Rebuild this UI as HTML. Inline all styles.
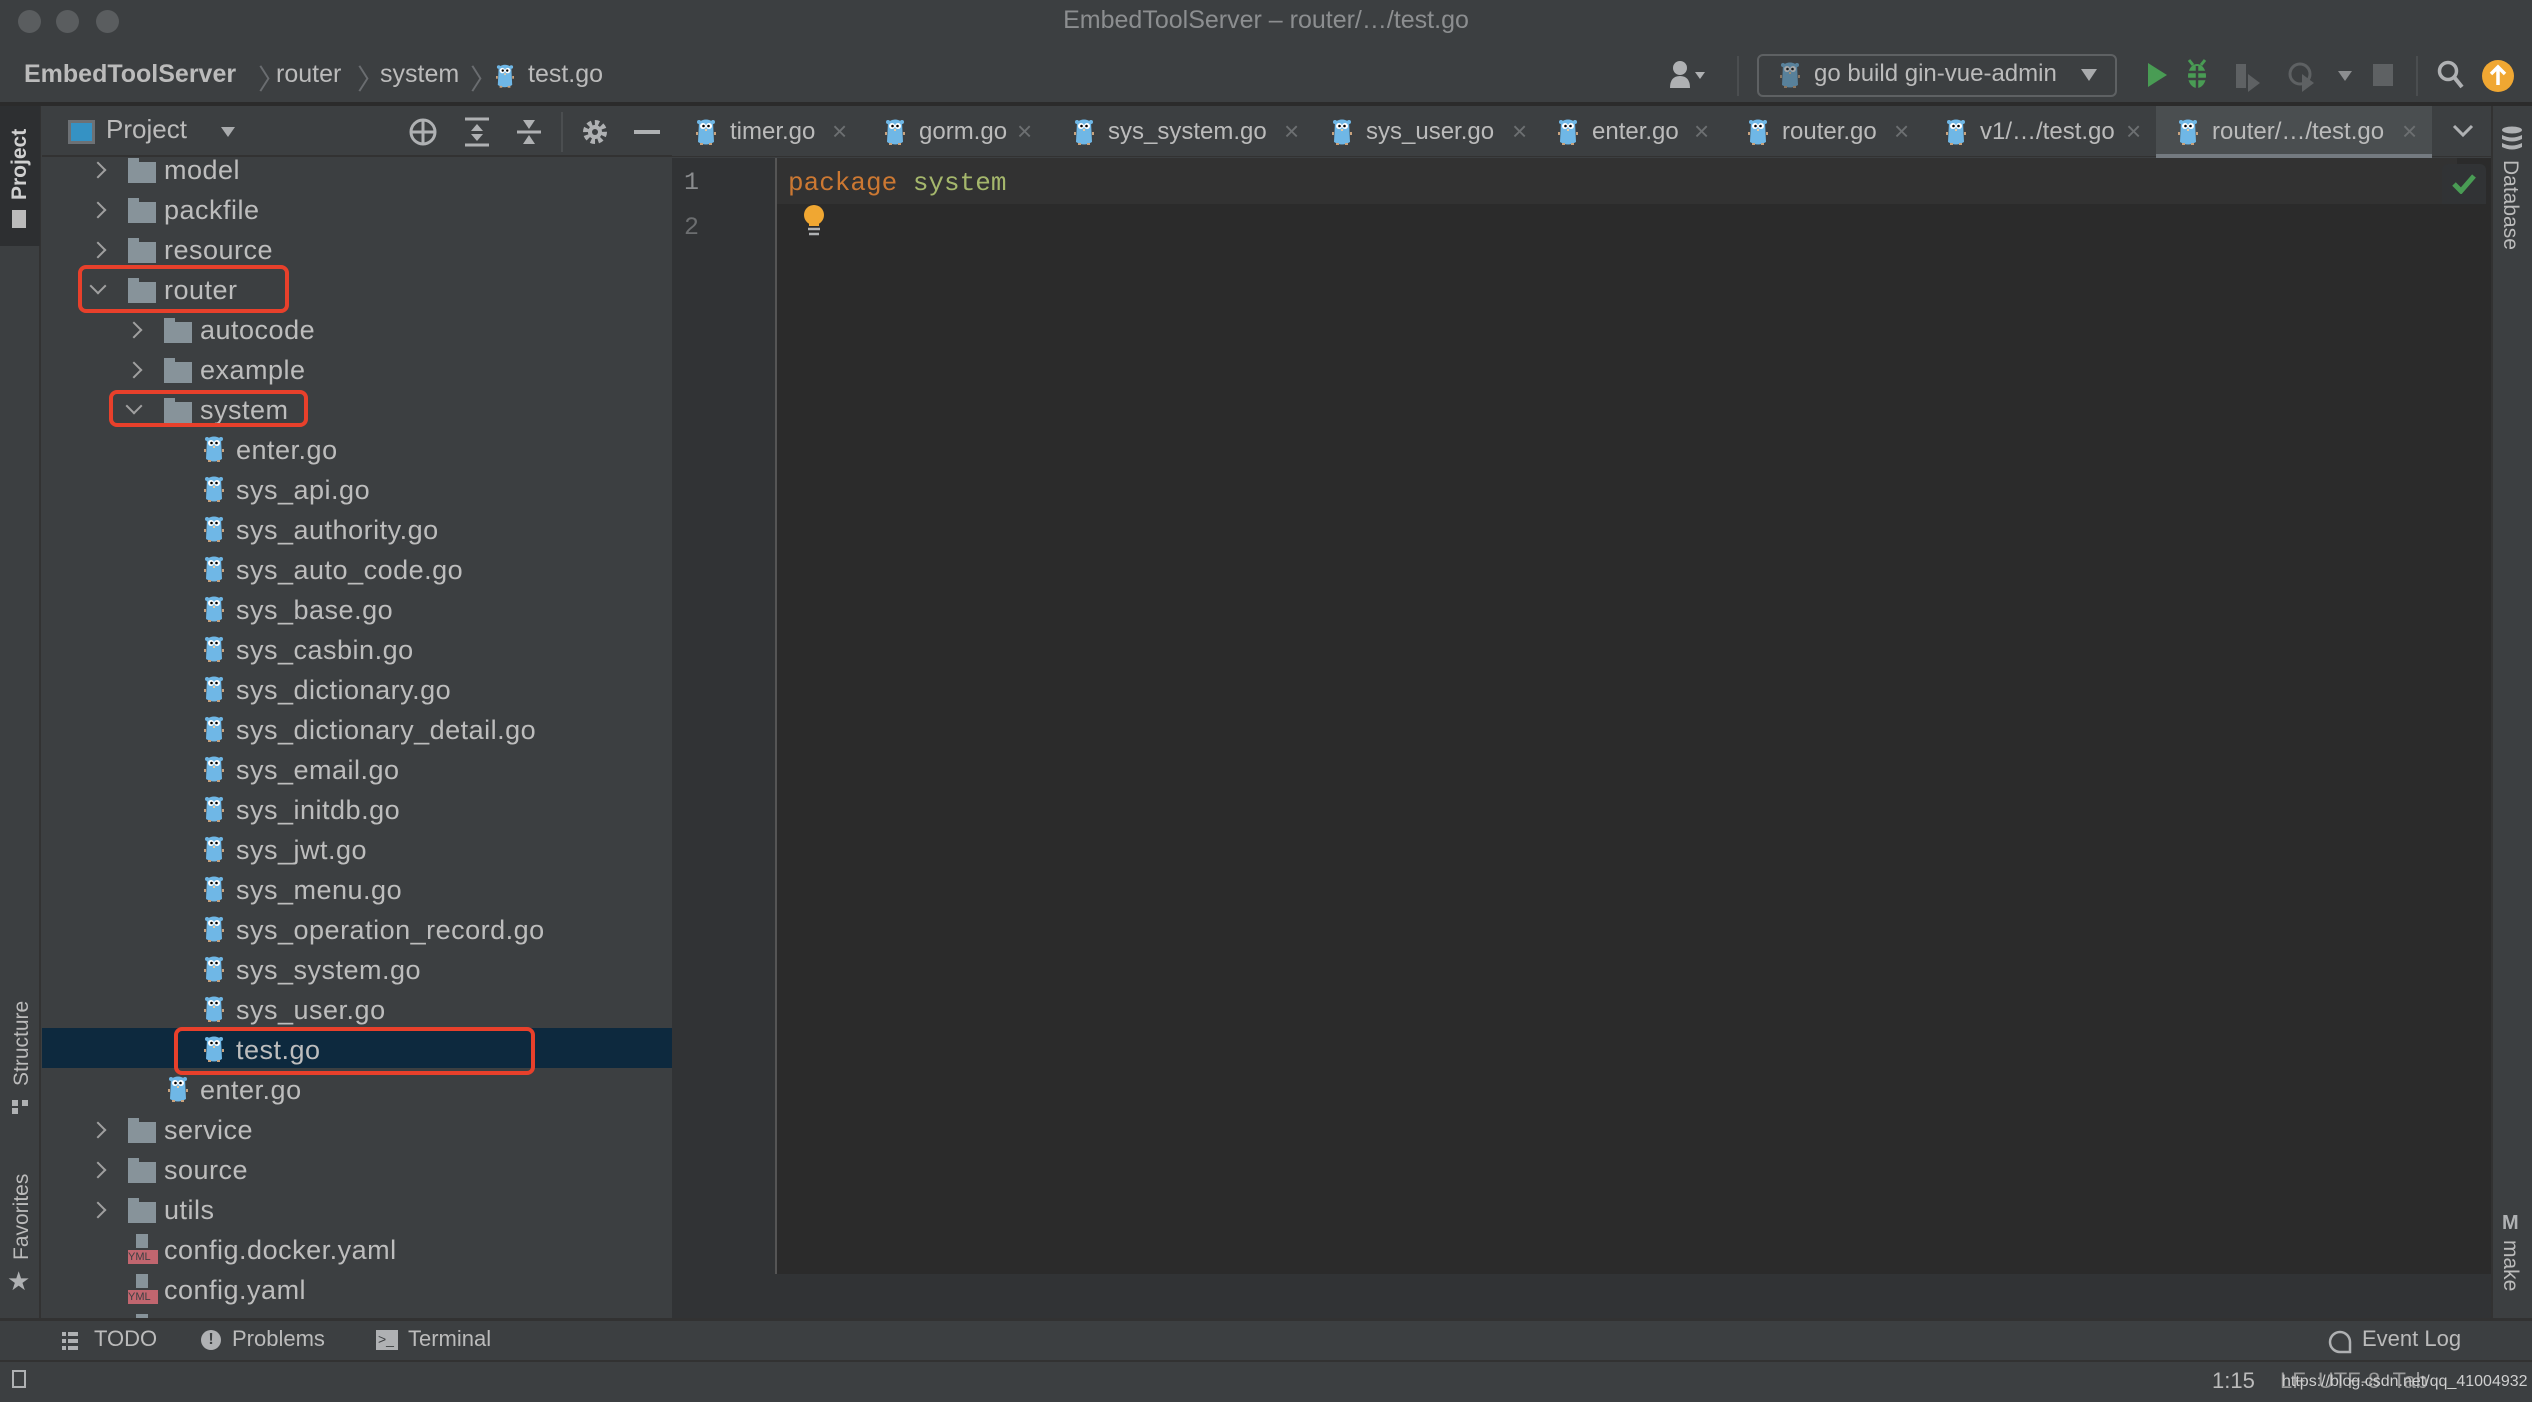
<!DOCTYPE html>
<html><head><meta charset="utf-8">
<style>
*{margin:0;padding:0;box-sizing:border-box}
body{width:2532px;height:1402px;background:#3c3f41;font-family:"Liberation Sans",sans-serif;color:#bbbbbb;position:relative;overflow:hidden}
.a{position:absolute}
.t{position:absolute;font-size:27px;letter-spacing:0.5px;line-height:40px;white-space:nowrap;color:#bdbdbd}
.arr{position:absolute;width:12px;height:12px;border-right:2.5px solid #a0a0a0;border-bottom:2.5px solid #a0a0a0}
.r{transform:rotate(-45deg)}
.d{transform:rotate(45deg)}
.fold{position:absolute;width:28px;height:21px;background:#87939a}
.fold:before{content:"";position:absolute;left:0;top:-4px;width:11px;height:5px;background:#87939a}
.box{position:absolute;border:4px solid #e8402b;border-radius:8px}
.tab{position:absolute;top:106px;height:51px;font-size:24px;line-height:51px;color:#bbbbbb;white-space:nowrap}
.x{position:absolute;font-size:26px;color:#6c6f71;top:0}
.vt{position:absolute;font-size:21px;color:#bbbbbb;white-space:nowrap;transform-origin:left top}
</style></head><body>
<svg width="0" height="0" style="position:absolute">
<defs>
<symbol id="g" viewBox="0 0 20 28">
<path d="M3 4 Q10 -1 17 4 L18 24 Q10 29 2 24Z" fill="#6fb7e6"/>
<ellipse cx="3" cy="4" rx="2" ry="2" fill="#6fb7e6"/><ellipse cx="17" cy="4" rx="2" ry="2" fill="#6fb7e6"/>
<circle cx="7" cy="8" r="3" fill="#fff"/><circle cx="13" cy="8" r="3" fill="#fff"/>
<circle cx="7.5" cy="8" r="1.3" fill="#000"/><circle cx="12.5" cy="8" r="1.3" fill="#000"/>
<rect x="9" y="11" width="2" height="2" fill="#e8c9a0"/>
<rect x="0" y="14" width="2" height="3" fill="#c9a27c"/><rect x="18" y="14" width="2" height="3" fill="#c9a27c"/>
<rect x="4" y="25" width="3" height="2" fill="#c9a27c"/><rect x="13" y="25" width="3" height="2" fill="#c9a27c"/>
</symbol>
</defs></svg>

<!-- title bar -->
<div class="a" style="left:0;top:0;width:2532px;height:104px;background:#3c3f41"></div>
<div class="a" style="left:18px;top:10px;width:23px;height:23px;border-radius:50%;background:#5a5d5f"></div>
<div class="a" style="left:56px;top:10px;width:23px;height:23px;border-radius:50%;background:#5a5d5f"></div>
<div class="a" style="left:96px;top:10px;width:23px;height:23px;border-radius:50%;background:#5a5d5f"></div>
<div class="a" style="left:0;top:6px;width:2532px;text-align:center;font-size:25px;color:#8c8e90">EmbedToolServer – router/…/test.go</div>

<!-- nav bar -->
<div class="a" style="left:24px;top:60px;font-size:25px;font-weight:bold;color:#bbbbbb">EmbedToolServer</div>
<div class="a" style="left:258px;top:58px;font-size:28px;color:#6a6d70">〉</div>
<div class="a" style="left:276px;top:60px;font-size:25px">router</div>
<div class="a" style="left:357px;top:58px;font-size:28px;color:#6a6d70">〉</div>
<div class="a" style="left:380px;top:60px;font-size:25px">system</div>
<div class="a" style="left:470px;top:58px;font-size:28px;color:#6a6d70">〉</div>
<svg class="a" style="left:496px;top:62px" width="18" height="28"><use href="#g"/></svg>
<div class="a" style="left:528px;top:60px;font-size:25px">test.go</div>

<!-- toolbar right -->
<svg class="a" style="left:1668px;top:60px" width="40" height="30"><circle cx="12" cy="8" r="7" fill="#afb1b3"/><path d="M2 28 Q2 16 12 16 Q22 16 22 28Z" fill="#afb1b3"/><path d="M27 12h10l-5 7z" fill="#afb1b3"/></svg>
<div class="a" style="left:1737px;top:56px;width:2px;height:40px;background:#4b4e50"></div>
<div class="a" style="left:1757px;top:54px;width:360px;height:43px;border:2px solid #5e6163;border-radius:6px"></div>
<svg class="a" style="left:1780px;top:60px;opacity:.55" width="20" height="30"><use href="#g"/></svg>
<div class="a" style="left:1814px;top:60px;font-size:24px;color:#bbbbbb">go build gin-vue-admin</div>
<svg class="a" style="left:2080px;top:68px" width="18" height="14"><path d="M1 1h16l-8 12z" fill="#a9abad"/></svg>
<svg class="a" style="left:2146px;top:62px" width="22" height="26"><path d="M2 1l19 12L2 25z" fill="#499c54"/></svg>
<svg class="a" style="left:2184px;top:58px" width="26" height="32"><ellipse cx="13" cy="18" rx="9" ry="12" fill="#499c54"/><path d="M5 2l4 5M21 2l-4 5" stroke="#499c54" stroke-width="3"/><path d="M4 14h18M4 21h18M13 8v22" stroke="#3c3f41" stroke-width="2.5"/></svg>
<svg class="a" style="left:2234px;top:60px" width="28" height="32"><path d="M2 4h10v24H2z" fill="#5e6163"/><path d="M14 14l12 9-12 9z" fill="#5e6163"/></svg>
<svg class="a" style="left:2288px;top:60px" width="28" height="32"><circle cx="12" cy="14" r="10" fill="none" stroke="#5e6163" stroke-width="3"/><path d="M14 14l12 9-12 9z" fill="#5e6163"/></svg>
<svg class="a" style="left:2337px;top:70px" width="16" height="12"><path d="M1 1h14l-7 10z" fill="#8c8e90"/></svg>
<div class="a" style="left:2373px;top:64px;width:20px;height:22px;background:#5e6163"></div>
<div class="a" style="left:2416px;top:56px;width:2px;height:40px;background:#4b4e50"></div>
<svg class="a" style="left:2437px;top:60px" width="28" height="30"><circle cx="11" cy="11" r="8.5" fill="none" stroke="#afb1b3" stroke-width="3.5"/><path d="M17 17l8 10" stroke="#afb1b3" stroke-width="4"/></svg>
<svg class="a" style="left:2481px;top:58px" width="34" height="36"><circle cx="17" cy="18" r="16" fill="#f0a732"/><path d="M17 9v18M10 16l7-7 7 7" stroke="#fff" stroke-width="3.5" fill="none"/></svg>

<div class="a" style="left:0;top:102px;width:2532px;height:4px;background:#2b2b2b"></div>

<!-- left stripe -->
<div class="a" style="left:0;top:106px;width:41px;height:1212px;background:#3c3f41;border-right:2px solid #323232"></div>
<div class="a" style="left:0;top:106px;width:40px;height:140px;background:#2d2f31"></div>
<div class="vt" style="left:8px;top:200px;transform:rotate(-90deg);font-weight:bold;color:#d0d0d0">Project</div>
<div class="a" style="left:12px;top:210px;width:14px;height:18px;background:#bbbbbb"></div>
<div class="vt" style="left:10px;top:1086px;transform:rotate(-90deg)">Structure</div>
<div class="a" style="left:12px;top:1100px;width:6px;height:6px;background:#afb1b3;box-shadow:10px 0 0 #afb1b3,0 8px 0 #afb1b3"></div>
<div class="vt" style="left:10px;top:1260px;transform:rotate(-90deg)">Favorites</div>
<div class="a" style="left:7px;top:1266px;font-size:26px;color:#afb1b3">★</div>

<!-- project panel -->
<div class="a" style="left:42px;top:106px;width:630px;height:51px;background:#3c3f41;border-bottom:2px solid #323232"></div>
<div class="a" style="left:68px;top:120px;width:27px;height:24px;border:3px solid #6d7175;background:#3592c4"></div>
<div class="a" style="left:106px;top:114px;font-size:26px">Project</div>
<svg class="a" style="left:220px;top:126px" width="16" height="12"><path d="M1 1h14l-7 10z" fill="#a9abad"/></svg>
<svg class="a" style="left:408px;top:117px" width="30" height="30"><circle cx="15" cy="15" r="12" fill="none" stroke="#afb1b3" stroke-width="3"/><path d="M15 3v24M3 15h24" stroke="#afb1b3" stroke-width="3"/></svg>
<svg class="a" style="left:464px;top:117px" width="26" height="30"><path d="M1 2h24M1 28h24" stroke="#afb1b3" stroke-width="3"/><path d="M13 7l-6 7h12zM13 24l-6-7h12z" fill="#afb1b3"/></svg>
<svg class="a" style="left:516px;top:117px" width="26" height="30"><path d="M1 15h24" stroke="#afb1b3" stroke-width="3"/><path d="M13 12l-6-9h12zM13 18l-6 9h12z" fill="#afb1b3"/></svg>
<div class="a" style="left:561px;top:112px;width:2px;height:40px;background:#4b4e50"></div>
<svg class="a" style="left:580px;top:117px" width="30" height="30"><circle cx="15" cy="15" r="9" fill="none" stroke="#afb1b3" stroke-width="6" stroke-dasharray="4 3"/><circle cx="15" cy="15" r="7" fill="#afb1b3"/><circle cx="15" cy="15" r="3" fill="#3c3f41"/></svg>
<div class="a" style="left:634px;top:130px;width:26px;height:4px;background:#afb1b3"></div>

<div class="a" style="left:42px;top:1028px;width:630px;height:40px;background:#0d293e"></div>

<!-- tree -->
<div class="arr r" style="left:92px;top:164px"></div><div class="fold" style="left:128px;top:162px"></div><div class="t" style="left:164px;top:150px">model</div>
<div class="arr r" style="left:92px;top:204px"></div><div class="fold" style="left:128px;top:202px"></div><div class="t" style="left:164px;top:190px">packfile</div>
<div class="arr r" style="left:92px;top:244px"></div><div class="fold" style="left:128px;top:242px"></div><div class="t" style="left:164px;top:230px">resource</div>
<div class="arr d" style="left:92px;top:280px"></div><div class="fold" style="left:128px;top:282px"></div><div class="t" style="left:164px;top:270px">router</div>
<div class="arr r" style="left:128px;top:324px"></div><div class="fold" style="left:164px;top:322px"></div><div class="t" style="left:200px;top:310px">autocode</div>
<div class="arr r" style="left:128px;top:364px"></div><div class="fold" style="left:164px;top:362px"></div><div class="t" style="left:200px;top:350px">example</div>
<div class="arr d" style="left:128px;top:400px"></div><div class="fold" style="left:164px;top:402px"></div><div class="t" style="left:200px;top:390px">system</div>

<svg class="a" style="left:204px;top:435px" width="20" height="28"><use href="#g"/></svg><div class="t" style="left:236px;top:430px">enter.go</div>
<svg class="a" style="left:204px;top:475px" width="20" height="28"><use href="#g"/></svg><div class="t" style="left:236px;top:470px">sys_api.go</div>
<svg class="a" style="left:204px;top:515px" width="20" height="28"><use href="#g"/></svg><div class="t" style="left:236px;top:510px">sys_authority.go</div>
<svg class="a" style="left:204px;top:555px" width="20" height="28"><use href="#g"/></svg><div class="t" style="left:236px;top:550px">sys_auto_code.go</div>
<svg class="a" style="left:204px;top:595px" width="20" height="28"><use href="#g"/></svg><div class="t" style="left:236px;top:590px">sys_base.go</div>
<svg class="a" style="left:204px;top:635px" width="20" height="28"><use href="#g"/></svg><div class="t" style="left:236px;top:630px">sys_casbin.go</div>
<svg class="a" style="left:204px;top:675px" width="20" height="28"><use href="#g"/></svg><div class="t" style="left:236px;top:670px">sys_dictionary.go</div>
<svg class="a" style="left:204px;top:715px" width="20" height="28"><use href="#g"/></svg><div class="t" style="left:236px;top:710px">sys_dictionary_detail.go</div>
<svg class="a" style="left:204px;top:755px" width="20" height="28"><use href="#g"/></svg><div class="t" style="left:236px;top:750px">sys_email.go</div>
<svg class="a" style="left:204px;top:795px" width="20" height="28"><use href="#g"/></svg><div class="t" style="left:236px;top:790px">sys_initdb.go</div>
<svg class="a" style="left:204px;top:835px" width="20" height="28"><use href="#g"/></svg><div class="t" style="left:236px;top:830px">sys_jwt.go</div>
<svg class="a" style="left:204px;top:875px" width="20" height="28"><use href="#g"/></svg><div class="t" style="left:236px;top:870px">sys_menu.go</div>
<svg class="a" style="left:204px;top:915px" width="20" height="28"><use href="#g"/></svg><div class="t" style="left:236px;top:910px">sys_operation_record.go</div>
<svg class="a" style="left:204px;top:955px" width="20" height="28"><use href="#g"/></svg><div class="t" style="left:236px;top:950px">sys_system.go</div>
<svg class="a" style="left:204px;top:995px" width="20" height="28"><use href="#g"/></svg><div class="t" style="left:236px;top:990px">sys_user.go</div>
<svg class="a" style="left:204px;top:1035px" width="20" height="28"><use href="#g"/></svg><div class="t" style="left:236px;top:1030px">test.go</div>
<svg class="a" style="left:168px;top:1075px" width="20" height="28"><use href="#g"/></svg><div class="t" style="left:200px;top:1070px">enter.go</div>

<div class="arr r" style="left:92px;top:1124px"></div><div class="fold" style="left:128px;top:1122px"></div><div class="t" style="left:164px;top:1110px">service</div>
<div class="arr r" style="left:92px;top:1164px"></div><div class="fold" style="left:128px;top:1162px"></div><div class="t" style="left:164px;top:1150px">source</div>
<div class="arr r" style="left:92px;top:1204px"></div><div class="fold" style="left:128px;top:1202px"></div><div class="t" style="left:164px;top:1190px">utils</div>
<div class="a" style="left:136px;top:1234px;width:12px;height:14px;background:#87939a"></div><div class="a" style="left:128px;top:1250px;width:30px;height:14px;background:#c1666f;font-size:11px;line-height:14px;color:#3c3f41">YML</div><div class="t" style="left:164px;top:1230px">config.docker.yaml</div>
<div class="a" style="left:136px;top:1274px;width:12px;height:14px;background:#87939a"></div><div class="a" style="left:128px;top:1290px;width:30px;height:14px;background:#c1666f;font-size:11px;line-height:14px;color:#3c3f41">YML</div><div class="t" style="left:164px;top:1270px">config.yaml</div>
<div class="a" style="left:136px;top:1314px;width:12px;height:4px;background:#87939a"></div>

<div class="box" style="left:78px;top:265px;width:211px;height:48px"></div>
<div class="box" style="left:109px;top:390px;width:199px;height:37px"></div>
<div class="box" style="left:174px;top:1027px;width:361px;height:48px"></div>

<!-- editor -->
<div class="a" style="left:672px;top:106px;width:1819px;height:51px;background:#3c3f41;border-bottom:1px solid #323232"></div>
<div class="a" style="left:2156px;top:106px;width:276px;height:53px;background:#4a4e50"></div>
<div class="a" style="left:2156px;top:154px;width:276px;height:5px;background:#747a80"></div>

<div class="tab" style="left:696px"><svg style="position:absolute;top:12px" width="20" height="28"><use href="#g"/></svg><span style="position:absolute;left:34px">timer.go</span><span class="x" style="left:136px">×</span></div>
<div class="tab" style="left:885px"><svg style="position:absolute;top:12px" width="20" height="28"><use href="#g"/></svg><span style="position:absolute;left:34px">gorm.go</span><span class="x" style="left:132px">×</span></div>
<div class="tab" style="left:1074px"><svg style="position:absolute;top:12px" width="20" height="28"><use href="#g"/></svg><span style="position:absolute;left:34px">sys_system.go</span><span class="x" style="left:210px">×</span></div>
<div class="tab" style="left:1332px"><svg style="position:absolute;top:12px" width="20" height="28"><use href="#g"/></svg><span style="position:absolute;left:34px">sys_user.go</span><span class="x" style="left:180px">×</span></div>
<div class="tab" style="left:1558px"><svg style="position:absolute;top:12px" width="20" height="28"><use href="#g"/></svg><span style="position:absolute;left:34px">enter.go</span><span class="x" style="left:136px">×</span></div>
<div class="tab" style="left:1748px"><svg style="position:absolute;top:12px" width="20" height="28"><use href="#g"/></svg><span style="position:absolute;left:34px">router.go</span><span class="x" style="left:146px">×</span></div>
<div class="tab" style="left:1946px"><svg style="position:absolute;top:12px" width="20" height="28"><use href="#g"/></svg><span style="position:absolute;left:34px">v1/…/test.go</span><span class="x" style="left:180px">×</span></div>
<div class="tab" style="left:2178px"><svg style="position:absolute;top:12px" width="20" height="28"><use href="#g"/></svg><span style="position:absolute;left:34px">router/…/test.go</span><span class="x" style="left:224px">×</span></div>
<svg class="a" style="left:2452px;top:124px" width="22" height="14"><path d="M2 2l9 9 9-9" stroke="#afb1b3" stroke-width="3" fill="none"/></svg>

<div class="a" style="left:672px;top:158px;width:1819px;height:1116px;background:#2b2b2b"></div>
<div class="a" style="left:672px;top:158px;width:103px;height:1116px;background:#313335"></div>
<div class="a" style="left:775px;top:158px;width:2px;height:1116px;background:#555555"></div>
<div class="a" style="left:777px;top:158px;width:1680px;height:46px;background:#323232"></div>
<div class="a" style="left:2442px;top:164px;width:44px;height:40px;background:#313335;border-radius:6px 6px 0 0"></div>
<svg class="a" style="left:2452px;top:174px" width="24" height="20"><path d="M2 10l7 7L22 2" stroke="#499c54" stroke-width="5" fill="none"/></svg>
<div class="a" style="left:684px;top:168px;font-family:'Liberation Mono',monospace;font-size:25px;color:#8a8c8e">1</div>
<div class="a" style="left:684px;top:213px;font-family:'Liberation Mono',monospace;font-size:25px;color:#6c6e70">2</div>
<div class="a" style="left:788px;top:168px;font-family:'Liberation Mono',monospace;font-size:26px;color:#cc7832;white-space:pre">package <span style="color:#a5b76c">system</span></div>
<svg class="a" style="left:802px;top:205px" width="24" height="32"><circle cx="12" cy="10" r="10" fill="#f0a732"/><rect x="7" y="16" width="10" height="5" fill="#f0a732"/><path d="M6 24h12M7 29h10" stroke="#afb1b3" stroke-width="2.5"/></svg>
<div class="a" style="left:672px;top:1274px;width:1819px;height:44px;background:#313335"></div>

<!-- right stripe -->
<div class="a" style="left:2491px;top:106px;width:41px;height:1212px;background:#3c3f41;border-left:2px solid #323232"></div>
<svg class="a" style="left:2500px;top:126px" width="24" height="24"><ellipse cx="12" cy="4" rx="10" ry="3.5" fill="#afb1b3"/><path d="M2 9q10 5 20 0v4q-10 5-20 0zM2 17q10 5 20 0v4q-10 5-20 0z" fill="#afb1b3"/></svg>
<div class="vt" style="left:2522px;top:160px;transform:rotate(90deg)">Database</div>
<div class="a" style="left:2502px;top:1212px;font-size:20px;font-weight:bold;color:#afb1b3">M</div>
<div class="vt" style="left:2522px;top:1240px;transform:rotate(90deg)">make</div>

<!-- bottom tool bar -->
<div class="a" style="left:0;top:1318px;width:2532px;height:3px;background:#323232"></div>
<div class="a" style="left:0;top:1321px;width:2532px;height:39px;background:#3c3f41"></div>
<div class="a" style="left:62px;top:1332px;width:4px;height:4px;background:#afb1b3;box-shadow:0 7px 0 #afb1b3,0 14px 0 #afb1b3,6px 0 0 #afb1b3,6px 7px 0 #afb1b3,6px 14px 0 #afb1b3"></div>
<div class="a" style="left:68px;top:1332px;width:10px;height:4px;background:#afb1b3;box-shadow:0 7px 0 #afb1b3,0 14px 0 #afb1b3"></div>
<div class="a" style="left:94px;top:1326px;font-size:22px">TODO</div>
<div class="a" style="left:201px;top:1330px;width:20px;height:20px;border-radius:50%;background:#afb1b3;color:#3c3f41;font-size:16px;font-weight:bold;text-align:center;line-height:20px">!</div>
<div class="a" style="left:232px;top:1326px;font-size:22px">Problems</div>
<div class="a" style="left:376px;top:1330px;width:22px;height:20px;background:#afb1b3;color:#3c3f41;font-size:14px;line-height:18px;padding-left:2px">&gt;_</div>
<div class="a" style="left:408px;top:1326px;font-size:22px">Terminal</div>
<svg class="a" style="left:2328px;top:1330px" width="24" height="24"><path d="M12 2a10 10 0 1 0 0 20h10V12A10 10 0 0 0 12 2z" fill="none" stroke="#afb1b3" stroke-width="2.5"/></svg>
<div class="a" style="left:2362px;top:1326px;font-size:22px">Event Log</div>

<!-- status bar -->
<div class="a" style="left:0;top:1360px;width:2532px;height:2px;background:#323232"></div>
<div class="a" style="left:0;top:1362px;width:2532px;height:40px;background:#3c3f41"></div>
<div class="a" style="left:12px;top:1370px;width:14px;height:18px;border:2px solid #afb1b3"></div>
<div class="a" style="left:2212px;top:1368px;font-size:22px">1:15</div>
<div class="a" style="left:2280px;top:1368px;font-size:22px;color:#999">LF&nbsp;&nbsp;UTF-8&nbsp;&nbsp;Tab</div>
<div class="a" style="left:2282px;top:1373px;font-size:16px;color:#cfcfcf">https://blog.csdn.net/qq_41004932</div>
</body></html>
